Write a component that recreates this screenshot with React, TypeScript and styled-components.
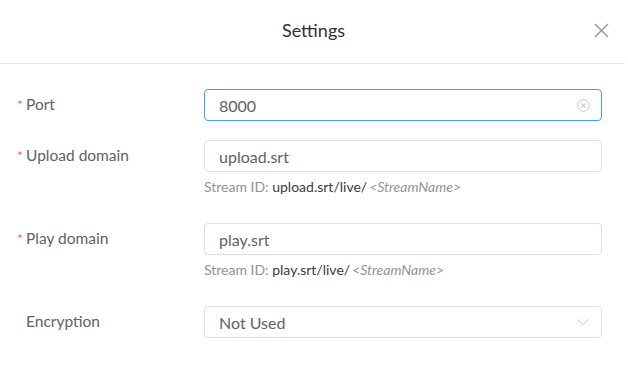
import styled, { createGlobalStyle } from 'styled-components';

const GlobalStyle = createGlobalStyle`
	html, body {
		margin: 0;
		padding: 0;
		background: #fff;
	}
	body {
		font-family: Lato, "Liberation Sans", sans-serif;
	}
`;

type Field = {
	label: string;
	value: string;
	required?: boolean;
	focused?: boolean;
	clearable?: boolean;
	select?: boolean;
	hint?: string;
};

const fields: Field[] = [
	{ label: 'Port', value: '8000', required: true, focused: true, clearable: true },
	{ label: 'Upload domain', value: 'upload.srt', required: true, hint: 'upload.srt/live/' },
	{ label: 'Play domain', value: 'play.srt', required: true, hint: 'play.srt/live/' },
	{ label: 'Encryption', value: 'Not Used', select: true },
];

const ClearIcon = (): JSX.Element => (
	<svg width="13" height="13" viewBox="0 0 13 13" fill="none" stroke="#c0c4cc" strokeWidth="1">
		<circle cx="6.5" cy="6.5" r="5.8" />
		<path d="M4.6 4.6 L8.4 8.4 M8.4 4.6 L4.6 8.4" strokeWidth="1.1" />
	</svg>
);

const ChevronIcon = (): JSX.Element => (
	<svg width="14" height="8" viewBox="0 0 14 8" fill="none" stroke="#c0c4cc" strokeWidth="1">
		<path d="M1.5 1.5 L7 6.5 L12.5 1.5" />
	</svg>
);

const CloseIcon = (): JSX.Element => (
	<svg width="15" height="15" viewBox="0 0 15 15" fill="none" stroke="#909399" strokeWidth="1.4">
		<path d="M1 1 L14 14 M14 1 L1 14" />
	</svg>
);

const App = (): JSX.Element => {
	return (
		<>
			<GlobalStyle />
			<Dialog>
				<Header>
					<Title>Settings</Title>
					<CloseButton><CloseIcon /></CloseButton>
				</Header>
				<Body>
					{fields.map((f) => (
						<FormItem key={f.label}>
							<Label>
								<Star visible={!!f.required}>*</Star>
								{f.label}
							</Label>
							<Control>
								<InputBox focused={!!f.focused}>
									<Value>{f.value}</Value>
									{f.clearable && <Suffix><ClearIcon /></Suffix>}
									{f.select && <Suffix><ChevronIcon /></Suffix>}
								</InputBox>
								{f.hint && (
									<Hint>
										Stream ID: <HintPath>{f.hint}</HintPath>
										<HintName>&lt;StreamName&gt;</HintName>
									</Hint>
								)}
							</Control>
						</FormItem>
					))}
				</Body>
			</Dialog>
		</>
	);
};

const Dialog = styled.div`
	width: 628px;
	height: 381px;
	background: #fff;
	box-sizing: border-box;
`;

const Header = styled.div`
	height: 64px;
	border-bottom: 1px solid #e4e7ed;
	box-sizing: border-box;
	display: flex;
	align-items: center;
	justify-content: center;
	position: relative;
	margin-right: 3px;
`;

const Title = styled.span`
	font-size: 18px;
	color: #303133;
	margin: -3px 0 0 2px;
`;

const CloseButton = styled.span`
	position: absolute;
	right: 16px;
	top: 23px;
	display: flex;
`;

const Body = styled.div`
	padding: 25px 26px 0 17px;
`;

const FormItem = styled.div`
	display: flex;
	align-items: flex-start;
	margin-bottom: 19px;
`;

const Label = styled.label`
	width: 187px;
	flex: none;
	height: 32px;
	display: flex;
	align-items: center;
	font-size: 15.5px;
	color: #606266;
	margin-top: -1px;
`;

const Star = styled.span<{ visible: boolean }>`
	color: #f56c6c;
	width: 9px;
	font-size: 14px;
	visibility: ${({ visible }): string => (visible ? 'visible' : 'hidden')};
`;

const Control = styled.div`
	flex: 1;
	display: flex;
	flex-direction: column;
`;

const InputBox = styled.div<{ focused: boolean }>`
	height: 32px;
	box-sizing: border-box;
	border: 1px solid ${({ focused }): string => (focused ? '#409eff' : '#dcdfe6')};
	border-radius: 4px;
	display: flex;
	align-items: center;
	padding: 0 10px 0 14px;
`;

const Value = styled.span`
	flex: 1;
	font-size: 16px;
	color: #606266;
`;

const Suffix = styled.span`
	display: flex;
	align-items: center;
	margin-right: 1px;
`;

const Hint = styled.div`
	margin-top: 5px;
	margin-bottom: 7px;
	line-height: 20px;
	font-size: 14px;
	color: #909399;
`;

const HintPath = styled.span`
	color: #3a3b3e;
`;

const HintName = styled.span`
	font-style: italic;
	margin-left: 2px;
`;

export default App;
